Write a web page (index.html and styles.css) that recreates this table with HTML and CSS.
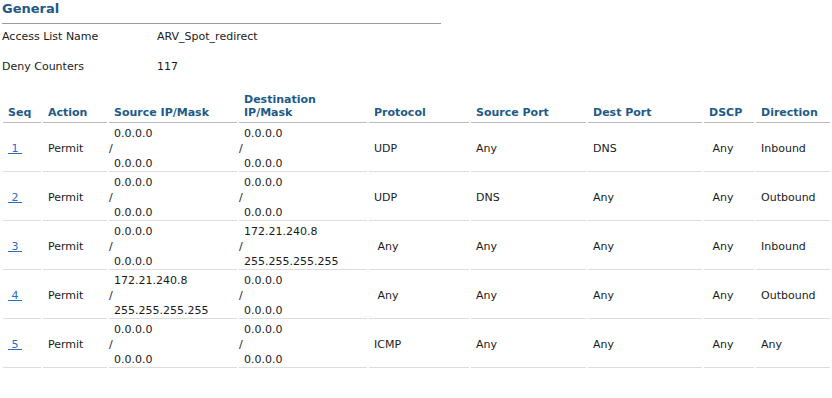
FILE: index.html
```html
<!DOCTYPE html>
<html lang="en">
  <head>
    <meta charset="UTF-8" />
    <title>Access List Details</title>
    <link rel="stylesheet" href="styles.css">
  </head>
  <body>
    <h2 class="section-title">General</h2>

    <div class="info">
      <div class="info-row">
        <span class="info-label">Access List Name</span>
        <span class="info-value">ARV_Spot_redirect</span>
      </div>
      <div class="info-row">
        <span class="info-label">Deny Counters</span>
        <span class="info-value">117</span>
      </div>
    </div>

    <table class="rules">
      <thead>
        <tr>
          <th class="c-seq">Seq</th>
          <th class="c-action">Action</th>
          <th class="c-ip">Source IP/Mask</th>
          <th class="c-ip">Destination<br>IP/Mask</th>
          <th class="c-proto">Protocol</th>
          <th class="c-sport">Source Port</th>
          <th class="c-dport">Dest Port</th>
          <th class="c-dscp">DSCP</th>
          <th class="c-dir">Direction</th>
        </tr>
      </thead>
      <tbody>
        <tr>
          <td><a href="#">&nbsp;1&nbsp;</a></td>
          <td>Permit</td>
          <td class="ip"><span class="addr">0.0.0.0</span>/<span class="addr">0.0.0.0</span></td>
          <td class="ip"><span class="addr">0.0.0.0</span>/<span class="addr">0.0.0.0</span></td>
          <td>UDP</td>
          <td>Any</td>
          <td>DNS</td>
          <td>&nbsp;Any</td>
          <td>Inbound</td>
        </tr>
        <tr>
          <td><a href="#">&nbsp;2&nbsp;</a></td>
          <td>Permit</td>
          <td class="ip"><span class="addr">0.0.0.0</span>/<span class="addr">0.0.0.0</span></td>
          <td class="ip"><span class="addr">0.0.0.0</span>/<span class="addr">0.0.0.0</span></td>
          <td>UDP</td>
          <td>DNS</td>
          <td>Any</td>
          <td>&nbsp;Any</td>
          <td>Outbound</td>
        </tr>
        <tr>
          <td><a href="#">&nbsp;3&nbsp;</a></td>
          <td>Permit</td>
          <td class="ip"><span class="addr">0.0.0.0</span>/<span class="addr">0.0.0.0</span></td>
          <td class="ip"><span class="addr">172.21.240.8</span>/<span class="addr">255.255.255.255</span></td>
          <td>&nbsp;Any</td>
          <td>Any</td>
          <td>Any</td>
          <td>&nbsp;Any</td>
          <td>Inbound</td>
        </tr>
        <tr>
          <td><a href="#">&nbsp;4&nbsp;</a></td>
          <td>Permit</td>
          <td class="ip"><span class="addr">172.21.240.8</span>/<span class="addr">255.255.255.255</span></td>
          <td class="ip"><span class="addr">0.0.0.0</span>/<span class="addr">0.0.0.0</span></td>
          <td>&nbsp;Any</td>
          <td>Any</td>
          <td>Any</td>
          <td>&nbsp;Any</td>
          <td>Outbound</td>
        </tr>
        <tr>
          <td><a href="#">&nbsp;5&nbsp;</a></td>
          <td>Permit</td>
          <td class="ip"><span class="addr">0.0.0.0</span>/<span class="addr">0.0.0.0</span></td>
          <td class="ip"><span class="addr">0.0.0.0</span>/<span class="addr">0.0.0.0</span></td>
          <td>ICMP</td>
          <td>Any</td>
          <td>Any</td>
          <td>&nbsp;Any</td>
          <td>Any</td>
        </tr>
      </tbody>
    </table>
  </body>
</html>
```

FILE: styles.css
```css
* {
  margin: 0;
  padding: 0;
  box-sizing: border-box;
}

body {
  font-family: "DejaVu Sans", Verdana, sans-serif;
  font-size: 11px;
  color: #1a1a1a;
  background-color: #fff;
  overflow: hidden;
}

.section-title {
  width: 439px;
  margin-left: 2px;
  padding-bottom: 5px;
  font-size: 13px;
  line-height: 18px;
  color: #1d5a87;
  border-bottom: 1px solid #9a9aa2;
}

.info {
  margin-top: 6px;
  margin-left: 2px;
}

.info-row {
  display: flex;
  line-height: 14px;
  margin-bottom: 16px;
}

.info-label {
  width: 155px;
}

.rules {
  table-layout: fixed;
  border-collapse: separate;
  border-spacing: 2px 0;
  width: 831px;
  margin-top: -1px;
  margin-left: 1px;
}

.rules th {
  padding: 4px 0 3px 5px;
  text-align: left;
  vertical-align: bottom;
  line-height: 13px;
  color: #1d5a87;
  border-bottom: 1px solid #bbb;
  white-space: nowrap;
}

.rules td {
  padding: 3px 0 0 5px;
  line-height: 15px;
  vertical-align: middle;
  border-bottom: 1px solid #ddd;
  white-space: nowrap;
}

.rules td.ip {
  padding-left: 0;
}

.addr {
  display: block;
  padding-left: 5px;
}

.rules a {
  color: #2a6cc0;
}

.c-seq { width: 38px; }
.c-action { width: 64px; }
.c-ip { width: 128px; }
.c-proto { width: 100px; }
.c-sport { width: 115px; }
.c-dport { width: 114px; }
.c-dscp { width: 50px; }
.c-dir { width: 74px; }
```
